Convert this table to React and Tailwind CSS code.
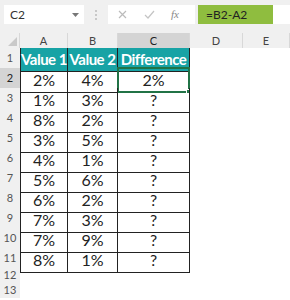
const ROWS = [
  ["2%", "4%", "2%"],
  ["1%", "3%", "?"],
  ["8%", "2%", "?"],
  ["3%", "5%", "?"],
  ["4%", "1%", "?"],
  ["5%", "6%", "?"],
  ["6%", "2%", "?"],
  ["7%", "3%", "?"],
  ["7%", "9%", "?"],
  ["8%", "1%", "?"],
];

const COLS = "grid grid-cols-[20px_48px_50px_72px_53px_1fr]";

function Toolbar() {
  return (
    <div className="flex h-[33px] items-start bg-[#f0f0f0] pt-[5px] pl-[4px]">
      <div className="flex h-[19px] w-[80px] items-center justify-between bg-white pl-[6px] pr-[5px] text-[12px] text-[#333]">
        <span>C2</span>
        <svg width="7" height="4" viewBox="0 0 7 4">
          <path d="M0 0h7L3.5 4z" fill="#777" />
        </svg>
      </div>
      <div className="flex w-[24px] flex-col items-center gap-[2px] pt-[5px]">
        <span className="h-[2px] w-[2px] bg-[#c8c8c8]" />
        <span className="h-[2px] w-[2px] bg-[#c8c8c8]" />
        <span className="h-[2px] w-[2px] bg-[#c8c8c8]" />
      </div>
      <div className="flex h-[19px] w-[87px] items-center bg-white">
        <svg className="ml-[10px]" width="9" height="9" viewBox="0 0 9 9">
          <path d="M1 1l7 7M8 1L1 8" stroke="#bbb" strokeWidth="1.2" />
        </svg>
        <svg className="ml-[17px]" width="11" height="9" viewBox="0 0 11 9">
          <path d="M1 5l3 3 6-7" stroke="#c4c4c4" strokeWidth="1.2" fill="none" />
        </svg>
        <span className="ml-[16px] font-['Liberation_Serif',serif] text-[11px] italic text-[#888]">
          fx
        </span>
      </div>
      <div className="ml-[3px] flex h-[19px] w-[75px] items-center bg-[#8fbd3f] pl-[8px] text-[12px] text-[#222]">
        =B2-A2
      </div>
      <div className="h-[19px] flex-1 bg-white" />
    </div>
  );
}

function ColumnHeaders() {
  const heads = ["A", "B", "C", "D", "E"];
  return (
    <div className={`${COLS} h-[15px] bg-[#f0f0f0] text-[11px] text-[#444]`}>
      <div className="flex items-end justify-end border-r border-[#d8d8d8] pr-[2px] pb-[2px]">
        <svg width="9" height="9" viewBox="0 0 9 9">
          <path d="M9 0v9H0z" fill="#c9c9c9" />
        </svg>
      </div>
      {heads.map((h) => (
        <div
          key={h}
          className={`flex items-center justify-center border-r border-[#d8d8d8] leading-none ${
            h === "C" ? "bg-[#d4d4d4] text-[#222]" : ""
          }`}
        >
          {h}
        </div>
      ))}
    </div>
  );
}

function RowHead({ n, h, active }) {
  return (
    <div
      className={`flex items-center justify-center ${h} text-[11px] ${
        active ? "bg-[#d4d4d4] text-[#222]" : "bg-[#f0f0f0] text-[#555]"
      }`}
    >
      {n}
    </div>
  );
}

export default function App() {
  return (
    <div className="h-[300px] w-[290px] overflow-hidden bg-white font-['Lato','Liberation_Sans',sans-serif]">
      <Toolbar />
      <ColumnHeaders />

      <div className={`${COLS} h-[20px]`}>
        <RowHead n={1} h="h-[20px]" />
        {["Value 1", "Value 2", "Difference"].map((t, i) => (
          <div
            key={t}
            className={`flex items-center justify-center overflow-visible whitespace-nowrap border-r border-b border-[#222] bg-[#17a3a5] text-[15px] font-bold tracking-[-0.5px] text-white ${
              i === 0 ? "border-l" : ""
            }`}
          >
            {t}
          </div>
        ))}
        <div />
        <div />
      </div>

      {ROWS.map((r, ri) => (
        <div key={ri} className={`${COLS} h-[20px]`}>
          <RowHead n={ri + 2} h="h-[20px]" active={ri === 0} />
          {r.map((v, ci) => (
            <div
              key={ci}
              className={`relative flex items-center justify-center border-r border-b border-[#222] text-[16px] text-[#222] ${
                ci === 0 ? "border-l" : ""
              }`}
            >
              {v}
              {ri === 0 && ci === 2 && (
                <div className="absolute -top-[1px] -left-[1px] -right-[1px] -bottom-[1px] border-2 border-[#217346]">
                  <span className="absolute -right-[3px] -bottom-[3px] h-[5px] w-[5px] border border-white bg-[#217346]" />
                </div>
              )}
            </div>
          ))}
          <div />
          <div />
        </div>
      ))}

      <div className={`${COLS} h-[15px]`}>
        <RowHead n={12} h="h-[15px]" />
      </div>
      <div className={`${COLS} h-[15px]`}>
        <RowHead n={13} h="h-[15px]" />
      </div>
    </div>
  );
}
